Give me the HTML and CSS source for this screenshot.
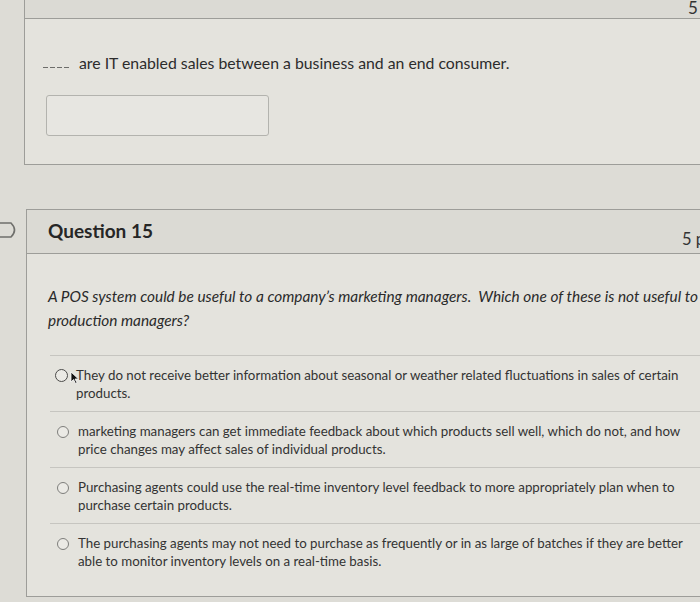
FILE: index.html
```html
<!DOCTYPE html>
<html>
<head>
<meta charset="utf-8">
<link rel="stylesheet" href="styles.css">
</head>
<body>
<div class="page">
  <section class="card card-top">
    <div class="card-head head-thin"><span class="pts">5 pts</span></div>
    <div class="card-body body-top">
      <p class="fill"><span class="blank"></span>are IT enabled sales between a business and an end consumer.</p>
      <div class="input"></div>
    </div>
  </section>

  <div class="flag">
    <svg width="20" height="18" viewBox="0 0 20 18"><path d="M-2 2 H11 Q18 9 11 16 H-2" fill="none" stroke="#6f6f6c" stroke-width="1.6"/></svg>
  </div>

  <section class="card card-q">
    <div class="card-head head-q">
      <h2 class="qtitle">Question 15</h2>
      <span class="pts pts-q">5 pts</span>
    </div>
    <div class="card-body body-q">
      <p class="qtext">A POS system could be useful to a company’s marketing managers.&nbsp; Which one of these is not useful to production managers?</p>
      <ul class="answers">
        <li class="answer"><span class="radio radio-hover"></span><span class="atext">They do not receive better information about seasonal or weather related fluctuations in sales of certain products.</span>
          <svg class="cursor" width="9" height="13" viewBox="0 0 9 13"><path d="M1 1 L1 11 L3.5 8.5 L5.5 12.5 L7 11.8 L5 8 L8.5 8 Z" fill="#111" stroke="#fff" stroke-width="0.8"/></svg>
        </li>
        <li class="answer"><span class="radio"></span><span class="atext">marketing managers can get immediate feedback about which products sell well, which do not, and how price changes may affect sales of individual products.</span></li>
        <li class="answer"><span class="radio"></span><span class="atext">Purchasing agents could use the real-time inventory level feedback to more appropriately plan when to purchase certain products.</span></li>
        <li class="answer"><span class="radio"></span><span class="atext">The purchasing agents may not need to purchase as frequently or in as large of batches if they are better able to monitor inventory levels on a real-time basis.</span></li>
      </ul>
    </div>
  </section>
</div>
</body>
</html>
```

FILE: styles.css
```css
html, body {
  margin: 0;
  padding: 0;
}
body {
  width: 700px;
  height: 602px;
  overflow: hidden;
  background: #dddcd6;
  font-family: Lato, "Open Sans", sans-serif;
  color: #2f2f2f;
}
.page {
  position: relative;
  width: 700px;
}
.card {
  margin-left: 24px;
  margin-right: -40px;
  border-left: 1px solid #9d9d99;
  border-bottom: 1px solid #9d9d99;
  background: #e4e3dd;
}
.card-head {
  display: flex;
  align-items: center;
  justify-content: space-between;
  background: #dbdad4;
  border-bottom: 1px solid #9d9d99;
}
.head-thin {
  height: 18px;
  align-items: flex-start;
  padding-right: 15px;
}
.pts {
  font-size: 17px;
  line-height: 16px;
  color: #333;
  margin-left: auto;
}
.body-top {
  padding: 34px 0 28px 18px;
}
.fill {
  margin: 0;
  font-size: 15.8px;
  line-height: 20px;
  color: #2c2c2c;
}
.blank {
  display: inline-block;
  width: 28px;
  height: 1.5px;
  background: repeating-linear-gradient(90deg, #6d6d6a 0 5px, transparent 5px 7px);
  margin-right: 8px;
  vertical-align: 1px;
}
.input {
  margin: 22px 0 0 3px;
  width: 221px;
  height: 39px;
  border: 1px solid #b3b3ae;
  border-radius: 3px;
  background: #e7e6e1;
}
.flag {
  position: absolute;
  left: 0;
  top: 221px;
  width: 20px;
  height: 18px;
}
.card-q {
  margin-top: 44px;
  margin-left: 26px;
  border-top: 1px solid #9d9d99;
}
.head-q {
  height: 43px;
  padding-left: 21px;
  padding-right: 22px;
}
.qtitle {
  margin: 0;
  font-size: 19px;
  font-weight: 700;
  color: #262626;
  margin-top: -2px;
}
.pts-q {
  margin-top: 14px;
  font-size: 16.5px;
}
.body-q {
  padding: 30px 0 17px 21px;
}
.qtext {
  margin: 0;
  width: 665px;
  font-size: 15.4px;
  font-style: italic;
  line-height: 24px;
  color: #2a2a2a;
}
.answers {
  list-style: none;
  margin: 23px 0 0 2px;
  padding: 0;
}
.answer {
  position: relative;
  display: flex;
  align-items: flex-start;
  border-top: 1px solid #c6c5c0;
  padding: 11px 0 9px 7px;
}
.radio {
  flex: none;
  width: 10px;
  height: 10px;
  border: 1px solid #7e7e7b;
  border-radius: 50%;
  margin-top: 3px;
  margin-right: 9px;
  background: #ebeae5;
}
.radio-hover {
  width: 11px;
  height: 11px;
  border: 1.6px solid #4b4b49;
  margin-left: -2px;
  margin-top: 2px;
  margin-right: 8px;
}
.atext {
  width: 615px;
  font-size: 13.3px;
  line-height: 17.5px;
  color: #333;
}
.cursor {
  position: absolute;
  left: 20px;
  top: 15px;
}
```
